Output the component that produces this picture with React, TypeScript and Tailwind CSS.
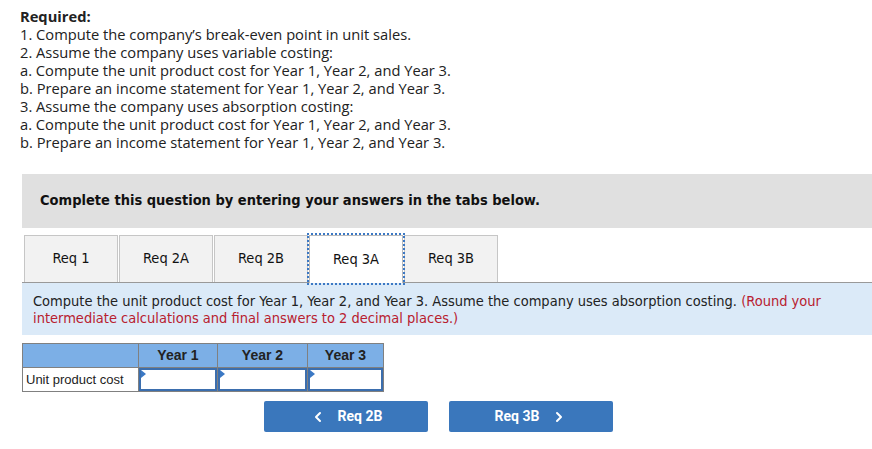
import { ChevronLeft, ChevronRight } from 'lucide-react'

const TABS = ['Req 1', 'Req 2A', 'Req 2B', 'Req 3A', 'Req 3B']
const ACTIVE = 'Req 3A'

const REQUIRED = [
  '1. Compute the company\u2019s break-even point in unit sales.',
  '2. Assume the company uses variable costing:',
  'a. Compute the unit product cost for Year 1, Year 2, and Year 3.',
  'b. Prepare an income statement for Year 1, Year 2, and Year 3.',
  '3. Assume the company uses absorption costing:',
  'a. Compute the unit product cost for Year 1, Year 2, and Year 3.',
  'b. Prepare an income statement for Year 1, Year 2, and Year 3.',
]

function InputCell() {
  return (
    <td className="border border-[#808080] p-0 h-[23px]">
      <div className="relative h-[23px] border-2 border-[#3b6eae] bg-white">
        <span className="absolute left-0 top-0 w-0 h-0 border-t-[4px] border-b-[4px] border-l-[5px] border-t-transparent border-b-transparent border-l-[#3b78c4]" />
      </div>
    </td>
  )
}

export default function App() {
  return (
    <div className="w-[872px] h-[449px] bg-white overflow-hidden">
      {/* required list */}
      <div className="pt-[7px] pl-[20px] text-[14.7px] leading-[18px] text-[#222] font-['Open_Sans',sans-serif]">
        <p className="font-bold">Required:</p>
        {REQUIRED.map((line, i) => (
          <p key={i}>{line}</p>
        ))}
      </div>

      <div className="ml-[22px] mt-[23px] h-[54px] bg-[#e0e0e0] flex items-center pl-[18px]">
        <p className="font-['DejaVu_Sans_Condensed','DejaVu_Sans',sans-serif] font-bold text-[14.5px] text-[#111]">
          Complete this question by entering your answers in the tabs below.
        </p>
      </div>

      {/* tabs */}
      <div className="ml-[22px] mt-[7px]">
        <div className="flex gap-[1px] pl-[2px] h-[47px]">
          {TABS.map(t => (
            <div
              key={t}
              className={
                t === ACTIVE
                  ? 'relative z-10 w-[94px] h-[48px] flex items-center justify-center bg-white border border-[#bbb] border-b-0 outline-dotted outline-2 outline-[#3b78c4] outline-offset-[0px]'
                  : 'w-[94px] flex items-center justify-center bg-[#f2f2f2] border border-[#c6c6c6] border-b-0'
              }
            >
              <span className="font-['DejaVu_Sans_Condensed','DejaVu_Sans',sans-serif] text-[14.5px] text-[#111]">{t}</span>
            </div>
          ))}
        </div>

        <div className="border-t border-[#999] bg-[#dbeaf8] pt-[10px] pb-[8px] pl-[11px] pr-[30px] font-['DejaVu_Sans_Condensed','DejaVu_Sans',sans-serif] text-[14.5px] leading-[17px] text-[#222]">
          Compute the unit product cost for Year 1, Year 2, and Year 3. Assume the company uses absorption costing.{' '}
          <span className="text-[#b8202f]">(Round your intermediate calculations and final answers to 2 decimal places.)</span>
        </div>

        {/* table */}
        <table className="mt-[8px] border-collapse font-['Liberation_Sans',Arial,sans-serif] text-[13px] text-[#222]">
          <thead>
            <tr className="bg-[#7cafe6] h-[24px]">
              <th className="border border-[#808080] w-[116px]" />
              <th className="border border-[#808080] w-[79px] font-bold text-[14px]">Year 1</th>
              <th className="border border-[#808080] w-[90px] font-bold text-[14px]">Year 2</th>
              <th className="border border-[#808080] w-[76px] font-bold text-[14px]">Year 3</th>
            </tr>
          </thead>
          <tbody>
            <tr>
              <td className="border border-[#808080] pl-[3px] pr-[2px] whitespace-nowrap">Unit product cost</td>
              <InputCell />
              <InputCell />
              <InputCell />
            </tr>
          </tbody>
        </table>

        {/* nav buttons */}
        <div className="flex gap-[21px] mt-[9px] ml-[242px] font-['Roboto',sans-serif] font-bold text-[14px] text-white">
          <button className="w-[164px] h-[31px] rounded-[2px] bg-[#3a77bc] flex items-center justify-center gap-[12px]">
            <ChevronLeft size={16} strokeWidth={3} />
            <span>Req 2B</span>
          </button>
          <button className="w-[164px] h-[31px] rounded-[2px] bg-[#3a77bc] flex items-center justify-center gap-[12px]">
            <span>Req 3B</span>
            <ChevronRight size={16} strokeWidth={3} />
          </button>
        </div>
      </div>
    </div>
  )
}
